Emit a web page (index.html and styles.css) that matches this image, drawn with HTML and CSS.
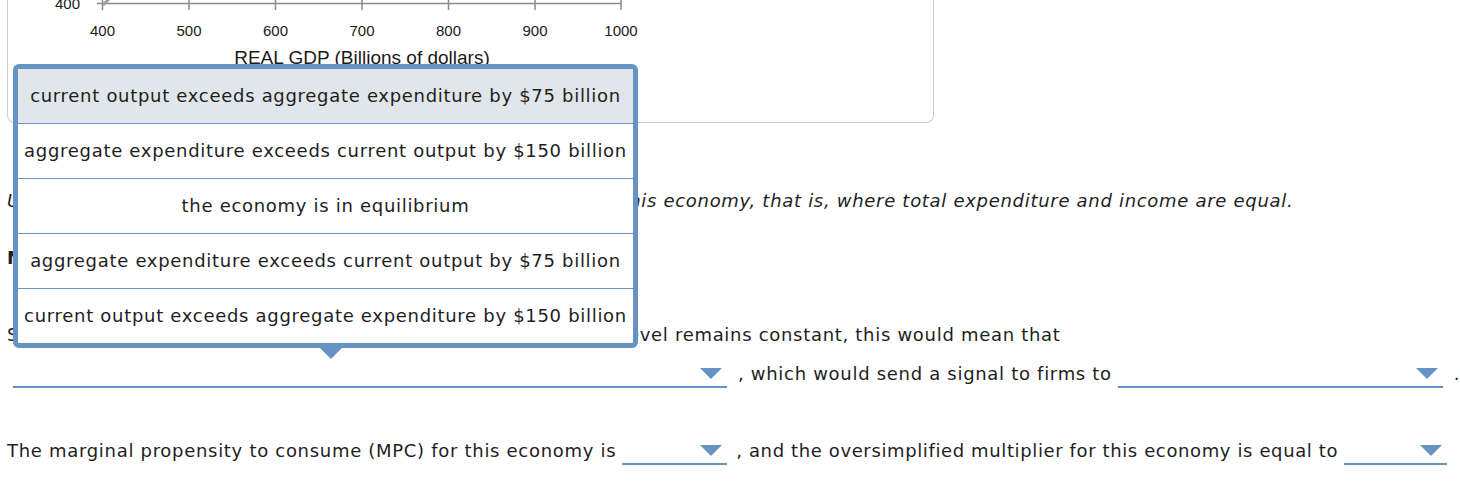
FILE: index.html
```html
<!DOCTYPE html>
<html>
<head>
<meta charset="utf-8">
<link rel="stylesheet" href="styles.css">
</head>
<body>
<div class="card">
  <svg class="chart" width="925" height="122" viewBox="0 0 925 122">
    <text class="ylab" x="72" y="9" text-anchor="end">400</text>
    <line x1="89" y1="3.5" x2="613" y2="3.5" stroke="#8a8a8a" stroke-width="1.5"/>
    <g stroke="#8a8a8a" stroke-width="1.5">
      <line x1="94.5" y1="-2" x2="94.5" y2="10"/>
      <line x1="181" y1="-2" x2="181" y2="10"/>
      <line x1="267.5" y1="-2" x2="267.5" y2="10"/>
      <line x1="354" y1="-2" x2="354" y2="10"/>
      <line x1="440.5" y1="-2" x2="440.5" y2="10"/>
      <line x1="527" y1="-2" x2="527" y2="10"/>
      <line x1="613" y1="-2" x2="613" y2="10"/>
    </g>
    <line x1="95" y1="5" x2="103" y2="-3" stroke="#a0a0a0" stroke-width="3"/>
    <g class="xlab" text-anchor="middle">
      <text x="94.5" y="36">400</text>
      <text x="181" y="36">500</text>
      <text x="267.5" y="36">600</text>
      <text x="354" y="36">700</text>
      <text x="440.5" y="36">800</text>
      <text x="527" y="36">900</text>
      <text x="613" y="36">1000</text>
    </g>
    <text class="xtitle" x="354" y="64" text-anchor="middle">REAL GDP (Billions of dollars)</text>
  </svg>
</div>

<p class="line italic">Use the black point (plus sign) to mark the equilibrium level in this economy, that is, where total expenditure and income are equal.</p>
<p class="line bold">Note: Select and drag the point.</p>
<p class="line plain">Suppose the current output level is $1,000 billion. As the price level remains constant, this would mean that</p>
<div class="row row4">
  <span class="dd dd-wide"><span class="arrow"></span></span>
  <span class="txt">, which would send a signal to firms to</span>
  <span class="dd dd-mid"><span class="arrow"></span></span>
  <span class="txt">.</span>
</div>
<div class="row row5">
  <span class="txt first">The marginal propensity to consume (MPC) for this economy is</span>
  <span class="dd dd-small"><span class="arrow"></span></span>
  <span class="txt tight">, and the oversimplified multiplier for this economy is equal to</span>
  <span class="dd dd-small2"><span class="arrow"></span></span>
</div>

<div class="popup">
  <ul class="menu">
    <li class="item active">current output exceeds aggregate expenditure by $75 billion</li>
    <li class="item">aggregate expenditure exceeds current output by $150 billion</li>
    <li class="item">the economy is in equilibrium</li>
    <li class="item">aggregate expenditure exceeds current output by $75 billion</li>
    <li class="item">current output exceeds aggregate expenditure by $150 billion</li>
  </ul>
  <span class="caret"></span>
</div>
</body>
</html>
```

FILE: styles.css
```css
html, body {
  margin: 0;
  padding: 0;
  background: #ffffff;
}
body {
  font-family: "DejaVu Sans", sans-serif;
  font-size: 18px;
  letter-spacing: 0.7px;
  color: #1e1e1e;
  width: 1460px;
  height: 488px;
  overflow: hidden;
  position: relative;
}
.card {
  margin-left: 7px;
  width: 925px;
  height: 122px;
  border: 1px solid #cccccc;
  border-top: none;
  border-radius: 0 0 8px 8px;
}
.chart {
  display: block;
  overflow: visible;
  letter-spacing: 0;
}
.chart text {
  font-family: "Liberation Sans", Arial, sans-serif;
  fill: #1a1a1a;
}
.xlab text, .ylab {
  font-size: 15px;
}
.xtitle {
  font-size: 19px;
}
.line {
  margin: 0;
  padding-left: 7px;
  line-height: 22px;
  white-space: nowrap;
}
.italic {
  font-style: italic;
  margin-top: 67px;
}
.bold {
  font-weight: bold;
  margin-top: 35px;
}
.plain {
  margin-top: 55px;
}
.row {
  display: flex;
  align-items: flex-end;
  white-space: nowrap;
  padding-left: 7px;
}
.row4 {
  margin-top: 14px;
}
.row5 {
  margin-top: 49px;
}
.txt {
  line-height: 22px;
  padding-bottom: 3px;
  padding-left: 5px;
}
.txt.first {
  padding-left: 0;
}
.txt.tight {
  padding-left: 3px;
  letter-spacing: 0.62px;
}
.dd {
  position: relative;
  display: block;
  height: 26px;
  border-bottom: 2px solid #6792c4;
  margin: 0 6px;
  flex: none;
}
.dd-wide { width: 714px; }
.dd-mid { width: 325px; }
.dd-small { width: 105px; }
.dd-small2 { width: 103px; }
.arrow {
  position: absolute;
  right: 5px;
  bottom: 7px;
  width: 0;
  height: 0;
  border-left: 11px solid transparent;
  border-right: 11px solid transparent;
  border-top: 11px solid #6792c4;
}
.popup {
  position: absolute;
  left: 13px;
  top: 64px;
  width: 615px;
  border: 5px solid #6792c4;
  border-radius: 6px;
  background: #ffffff;
}
.menu {
  list-style: none;
  margin: 0;
  padding: 0;
}
.item {
  height: 54px;
  line-height: 54px;
  text-align: center;
  border-top: 1px solid #6c97c7;
  color: #1e1e1e;
  white-space: nowrap;
}
.item:first-child {
  border-top: none;
}
.item.active {
  background: #e0e6e9;
}
.caret {
  position: absolute;
  left: 302px;
  bottom: -16px;
  width: 0;
  height: 0;
  border-left: 11px solid transparent;
  border-right: 11px solid transparent;
  border-top: 11px solid #6792c4;
}
```
